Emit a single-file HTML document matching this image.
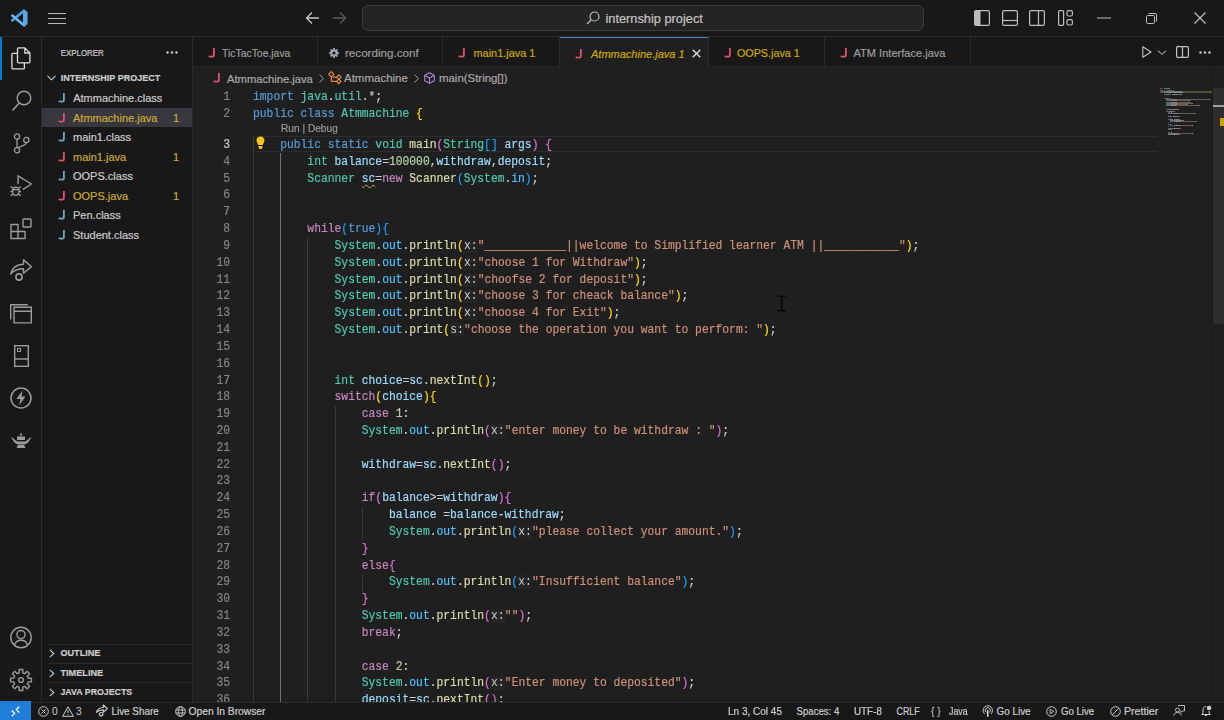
<!DOCTYPE html>
<html><head><meta charset="utf-8">
<style>
*{box-sizing:border-box;margin:0;padding:0}
html,body{width:1224px;height:720px;overflow:hidden;background:#1f1f1f;font-family:"Liberation Sans",sans-serif;color:#cccccc}
.cal,.fi .n,.fi .bd{-webkit-text-stroke:0.2px currentColor}
.abs{position:absolute}
#title{position:absolute;left:0;top:0;width:1224px;height:37px;background:#181818;border-bottom:1px solid #2b2b2b}
#act{position:absolute;left:0;top:37px;width:42px;height:665px;background:#181818;border-right:1px solid #2b2b2b}
#side{position:absolute;left:42px;top:37px;width:151px;height:665px;background:#181818;border-right:1px solid #2b2b2b}
#tabs{position:absolute;left:193px;top:37px;width:1031px;height:30px;background:#181818;border-bottom:1px solid #232323}
#status{position:absolute;left:0;top:702px;width:1224px;height:18px;background:#181818;border-top:1px solid #2b2b2b;font-size:10.5px;color:#cccccc}
.tab{position:absolute;top:37px;height:29px;border-right:1px solid #2b2b2b;font-size:11px;color:#9d9d9d;white-space:nowrap}
.tab .tx{position:absolute;top:10px}
.tab.active{background:#1f1f1f;border-top:1.5px solid #4b7dc4;height:30px}
.jic{position:absolute;font-weight:bold;color:#e8455a;font-size:11px}
.fi{position:absolute;left:42px;width:150px;height:19.5px;font-size:11px;color:#cccccc;white-space:nowrap}
.fi .j{position:absolute;left:17px;top:3px;color:#519aba;font-weight:bold;font-size:11px}
.fi .n{position:absolute;left:31px;top:3.8px}
.fi.err .j{color:#e8455a}
.fi.err .n{color:#c9a93a}
.fi .bd{position:absolute;left:131px;top:3.8px;color:#c9a93a}
.ln{position:absolute;left:198.7px;margin-top:0.6px;width:31px;text-align:right;font-family:"Liberation Mono",monospace;font-size:12.4px;line-height:16.83px;color:#858585;white-space:pre;-webkit-text-stroke:0.2px currentColor;transform:scaleX(0.91386);transform-origin:100% 0}
.ln.act{color:#cccccc}
.cl{position:absolute;left:253.4px;margin-top:0.6px;font-family:"Liberation Mono",monospace;font-size:12.4px;line-height:16.83px;white-space:pre;color:#cccccc;-webkit-text-stroke:0.2px currentColor;transform:scaleX(0.91386);transform-origin:0 0}
.kw{color:#569cd6}.ct{color:#c586c0}.ty{color:#4ec9b0}.fn{color:#dcdcaa}.va{color:#9cdcfe}.co{color:#4fc1ff}
.st{color:#ce9178}.nu{color:#b5cea8}.op{color:#cccccc}.b1{color:#ffd700}.b2{color:#da70d6}.b3{color:#179fff}
.hint{display:inline-block;width:15.32px;background:#252525;color:#d0d0d0;-webkit-text-stroke:0;border-radius:2px;line-height:14px;text-align:center}
.sq{color:#9cdcfe;text-decoration:underline wavy #c4ad4a;text-decoration-thickness:1px;text-underline-offset:2px}
.ig{position:absolute;width:1px;background:#3a3a3a}
.ig.on{background:#707070}
.sect{position:absolute;left:42px;width:150px;height:19px;border-top:1px solid #2b2b2b;font-size:9px;font-weight:bold;color:#cccccc}
svg{position:absolute;overflow:visible}
</style></head><body>

<!-- TITLE BAR -->
<div id="title"></div>
<!-- vscode logo -->
<svg style="left:9.5px;top:9px" width="18" height="18" viewBox="0 0 18 18">
 <path d="M14.2 1.6L2.3 11.4" stroke="#4f9fe6" stroke-width="2.6" stroke-linecap="round"/>
 <path d="M14.2 16.4L2.3 6.6" stroke="#6bb3ee" stroke-width="2.6" stroke-linecap="round"/>
 <path d="M13 0.8L17.6 2.8V15.2L13 17.2Z" fill="#5aa8ec"/>
</svg>
<!-- hamburger -->
<svg style="left:48px;top:12px" width="18" height="13" viewBox="0 0 18 13"><path d="M0 1.5H18M0 6.5H18M0 11.5H18" stroke="#b8b8b8" stroke-width="1.2"/></svg>
<!-- nav arrows -->
<svg style="left:305px;top:11px" width="15" height="14" viewBox="0 0 15 14"><path d="M14 7H1.5M7 1.5L1.5 7L7 12.5" stroke="#c8c8c8" stroke-width="1.3" fill="none"/></svg>
<svg style="left:332px;top:11px" width="15" height="14" viewBox="0 0 15 14"><path d="M1 7H13.5M8 1.5L13.5 7L8 12.5" stroke="#5a5a5a" stroke-width="1.3" fill="none"/></svg>
<!-- search box -->
<div class="abs" style="left:362px;top:5px;width:562px;height:26px;background:#242424;border:1px solid #3a3a3a;border-radius:6px"></div>
<svg style="left:586px;top:11px" width="14" height="14" viewBox="0 0 14 14"><circle cx="8.5" cy="5.5" r="4.5" stroke="#bdbdbd" stroke-width="1.2" fill="none"/><path d="M5.3 8.7L1 13" stroke="#bdbdbd" stroke-width="1.3"/></svg>
<div class="abs" style="left:606px;top:12.3px;font-size:12px;color:#c4c4c4"><span class="cal" title="internship project#0" style="display:inline-block;transform:translateX(-0.50px) scaleX(1.0653);transform-origin:0 50%">internship project</span></div>
<!-- layout icons -->
<svg style="left:974px;top:10px" width="16" height="16" viewBox="0 0 16 16"><rect x="0.6" y="0.6" width="14.8" height="14.8" rx="1.5" stroke="#bdbdbd" stroke-width="1.2" fill="none"/><rect x="1" y="1" width="5.5" height="14" fill="#bdbdbd"/></svg>
<svg style="left:1002px;top:10px" width="16" height="16" viewBox="0 0 16 16"><rect x="0.6" y="0.6" width="14.8" height="14.8" rx="1.5" stroke="#bdbdbd" stroke-width="1.2" fill="none"/><path d="M1 10.5H15" stroke="#bdbdbd" stroke-width="1.2"/></svg>
<svg style="left:1029px;top:10px" width="16" height="16" viewBox="0 0 16 16"><rect x="0.6" y="0.6" width="14.8" height="14.8" rx="1.5" stroke="#bdbdbd" stroke-width="1.2" fill="none"/><path d="M9.5 1V15" stroke="#bdbdbd" stroke-width="1.2"/></svg>
<svg style="left:1058px;top:10px" width="15" height="16" viewBox="0 0 15 16"><rect x="0.6" y="0.6" width="5" height="14.8" rx="1.2" stroke="#bdbdbd" stroke-width="1.2" fill="none"/><rect x="9" y="0.6" width="5.4" height="5.4" rx="1.5" stroke="#bdbdbd" stroke-width="1.2" fill="none"/><rect x="9" y="9.6" width="5.4" height="5.4" rx="1.5" stroke="#bdbdbd" stroke-width="1.2" fill="none"/></svg>
<!-- window controls -->
<svg style="left:1097px;top:17px" width="14" height="2" viewBox="0 0 14 2"><path d="M0 1H14" stroke="#bdbdbd" stroke-width="1"/></svg>
<svg style="left:1146px;top:13px" width="11" height="11" viewBox="0 0 11 11"><rect x="0.5" y="2.5" width="8" height="8" rx="1.2" stroke="#bdbdbd" fill="none"/><path d="M2.5 0.5H9A1.5 1.5 0 0 1 10.5 2V8.5" stroke="#bdbdbd" fill="none"/></svg>
<svg style="left:1194px;top:12px" width="12" height="12" viewBox="0 0 12 12"><path d="M0.5 0.5L11.5 11.5M11.5 0.5L0.5 11.5" stroke="#c4c4c4" stroke-width="1.1"/></svg>

<!-- ACTIVITY BAR -->
<div id="act"></div>
<div class="abs" style="left:0;top:37px;width:2px;height:43px;background:#0078d4"></div>
<svg style="left:11px;top:47px" width="20" height="22" viewBox="0 0 20 22"><path d="M7.5 0.9H13.8L18.9 6V14.8A1 1 0 0 1 17.9 15.8H7.5A1 1 0 0 1 6.5 14.8V1.9A1 1 0 0 1 7.5 0.9Z M13.8 0.9V6H18.9" stroke="#dcdcdc" stroke-width="1.3" fill="none" stroke-linejoin="round"/><path d="M6.5 6.3H1.9A1 1 0 0 0 0.9 7.3V20.9A1 1 0 0 0 1.9 21.9H12.4A1 1 0 0 0 13.4 20.9V15.8" stroke="#dcdcdc" stroke-width="1.3" fill="none"/></svg>
<svg style="left:11px;top:90px" width="21" height="22" viewBox="0 0 21 22"><circle cx="13" cy="8" r="6.8" stroke="#9c9c9c" stroke-width="1.4" fill="none"/><path d="M8.2 13L1.5 20.5" stroke="#9c9c9c" stroke-width="1.6"/></svg>
<svg style="left:13px;top:133px" width="17" height="21" viewBox="0 0 17 21"><circle cx="4" cy="3.5" r="2.6" stroke="#9c9c9c" stroke-width="1.3" fill="none"/><circle cx="4" cy="17.3" r="2.6" stroke="#9c9c9c" stroke-width="1.3" fill="none"/><circle cx="13.3" cy="7" r="2.6" stroke="#9c9c9c" stroke-width="1.3" fill="none"/><path d="M4 6.1V14.7M13.3 9.6C13.3 13 8 12.5 4.5 14.8" stroke="#9c9c9c" stroke-width="1.3" fill="none"/></svg>
<svg style="left:10px;top:175px" width="22" height="22" viewBox="0 0 22 22"><path d="M8.1 9.2V0.8L21.4 9L12.7 14.6" stroke="#9c9c9c" stroke-width="1.4" fill="none" stroke-linejoin="round"/><ellipse cx="5.8" cy="16.3" rx="3.2" ry="4.1" stroke="#9c9c9c" stroke-width="1.4" fill="none"/><path d="M2.8 14.6H8.8M0.6 11.6L2.9 13.1M0.6 16.5H2.6M0.6 20.6L2.9 19.4M11 11.6L8.7 13.1M11 16.5H9M11 20.6L8.7 19.4" stroke="#9c9c9c" stroke-width="1.3" fill="none"/></svg>
<svg style="left:10px;top:218px" width="22" height="21" viewBox="0 0 22 21"><path d="M1 6.5H8V13.5H15V20.5H1Z M8 13.5V20.5 M1 13.5H8" stroke="#9c9c9c" stroke-width="1.4" fill="none" stroke-linejoin="round"/><rect x="13" y="1" width="8" height="8" rx="0.8" stroke="#9c9c9c" stroke-width="1.4" fill="none"/></svg>
<svg style="left:10px;top:258px" width="22" height="23" viewBox="0 0 22 23"><path d="M0.7 16C2 9.5 7 6.5 13.5 6.3V1.8L21.3 8.6L13.5 15.2V10.8C8 10.8 4 12.3 0.7 16Z" stroke="#9c9c9c" stroke-width="1.4" fill="none" stroke-linejoin="round"/><circle cx="9" cy="19" r="3.1" stroke="#9c9c9c" stroke-width="1.6" fill="none"/></svg>
<svg style="left:10px;top:304px" width="22" height="20" viewBox="0 0 22 20"><path d="M0.7 15.5V0.7H17.8" stroke="#9c9c9c" stroke-width="1.4" fill="none"/><path d="M4 3.2H21.3V18.9H4Z M4 7.2H21.3" stroke="#9c9c9c" stroke-width="1.4" fill="none"/></svg>
<svg style="left:14px;top:345px" width="15" height="22" viewBox="0 0 15 22"><rect x="0.7" y="0.7" width="13.6" height="20.6" stroke="#9c9c9c" stroke-width="1.4" fill="none"/><path d="M1 14H14" stroke="#9c9c9c" stroke-width="1.4"/><rect x="3.5" y="3.5" width="3" height="3" stroke="#9c9c9c" stroke-width="1" fill="none"/></svg>
<svg style="left:10px;top:387px" width="22" height="22" viewBox="0 0 22 22"><circle cx="11" cy="11" r="10" stroke="#9c9c9c" stroke-width="1.5" fill="none"/><path d="M12.5 3.5L6.5 12H10.5L9 18.5L15.5 9.5H11.5Z" fill="#9c9c9c"/></svg>
<svg style="left:10px;top:432px" width="22" height="17" viewBox="0 0 22 17"><path d="M11 0.5L12.5 3.5H9.5Z" fill="#9c9c9c"/><path d="M1 5C4 6 5 9 8 9.5H15C17 9 19 6 21.5 5C20 8 18 12 14 12.5H8C5 12 3 9 1 5Z" fill="#9c9c9c"/><path d="M7 4.5H15V8H7Z" fill="#9c9c9c"/><path d="M8 13H14L15.5 16H6.5Z" fill="#9c9c9c"/></svg>
<svg style="left:10px;top:626px" width="22" height="23" viewBox="0 0 22 23"><circle cx="11" cy="11.5" r="10.2" stroke="#9c9c9c" stroke-width="1.4" fill="none"/><circle cx="11" cy="8.6" r="4.1" stroke="#9c9c9c" stroke-width="1.4" fill="none"/><path d="M4.6 18.9C5.6 15.6 8 14.2 11 14.2C14 14.2 16.4 15.6 17.4 18.9" stroke="#9c9c9c" stroke-width="1.4" fill="none"/></svg>
<svg style="left:10px;top:669px" width="22" height="22" viewBox="0 0 22 22"><path d="M18.17 9.17 L21.45 9.21 L21.45 12.79 L18.17 12.83 L17.36 14.78 L19.66 17.12 L17.12 19.66 L14.78 17.36 L12.83 18.17 L12.79 21.45 L9.21 21.45 L9.17 18.17 L7.22 17.36 L4.88 19.66 L2.34 17.12 L4.64 14.78 L3.83 12.83 L0.55 12.79 L0.55 9.21 L3.83 9.17 L4.64 7.22 L2.34 4.88 L4.88 2.34 L7.22 4.64 L9.17 3.83 L9.21 0.55 L12.79 0.55 L12.83 3.83 L14.78 4.64 L17.12 2.34 L19.66 4.88 L17.36 7.22Z" stroke="#9c9c9c" stroke-width="1.4" fill="none" stroke-linejoin="round"/><circle cx="11" cy="11" r="2.4" stroke="#9c9c9c" stroke-width="1.4" fill="none"/></svg>

<!-- SIDEBAR -->
<div id="side"></div>
<div class="abs" style="left:60.5px;top:48px;font-size:8.4px;color:#cccccc"><span class="cal" title="EXPLORER#0" style="display:inline-block;transform:translateX(-0.23px) scaleX(0.9393);transform-origin:0 50%">EXPLORER</span></div>
<svg style="left:166px;top:51px" width="12" height="3" viewBox="0 0 12 3"><circle cx="1.5" cy="1.5" r="1.2" fill="#ccc"/><circle cx="6" cy="1.5" r="1.2" fill="#ccc"/><circle cx="10.5" cy="1.5" r="1.2" fill="#ccc"/></svg>
<svg style="left:47px;top:75px" width="9" height="6" viewBox="0 0 9 6"><path d="M0.5 0.8L4.5 4.8L8.5 0.8" stroke="#cccccc" stroke-width="1.1" fill="none"/></svg>
<div class="abs" style="left:60px;top:72.5px;font-size:9.2px;font-weight:bold;color:#cccccc"><span class="cal" title="INTERNSHIP PROJECT#0" style="display:inline-block;transform:translateX(0.74px) scaleX(0.9805);transform-origin:0 50%">INTERNSHIP PROJECT</span></div>
<div class="fi" style="top:88.2px;"><span class="n"><span class="cal" title="Atmmachine.class#0" style="display:inline-block;transform:translateX(0.24px) scaleX(0.9973);transform-origin:0 50%">Atmmachine.class</span></span></div>
<svg style="left:58.3px;top:92px" width="8" height="11" viewBox="0 0 8 11"><path d="M5.9 1V8Q5.9 9.6 4.3 9.6H2.7Q1.5 9.6 0.9 8.7" stroke="#6fa8c4" stroke-width="1.8" fill="none"/></svg>
<div class="fi err" style="top:107.8px;background:#37373d;"><span class="n">Atmmachine.java</span><span class="bd">1</span></div>
<svg style="left:58.3px;top:111.5px" width="8" height="11" viewBox="0 0 8 11"><path d="M5.9 1V8Q5.9 9.6 4.3 9.6H2.7Q1.5 9.6 0.9 8.7" stroke="#e0506e" stroke-width="1.8" fill="none"/></svg>
<div class="fi" style="top:127.2px;"><span class="n">main1.class</span></div>
<svg style="left:58.3px;top:131px" width="8" height="11" viewBox="0 0 8 11"><path d="M5.9 1V8Q5.9 9.6 4.3 9.6H2.7Q1.5 9.6 0.9 8.7" stroke="#6fa8c4" stroke-width="1.8" fill="none"/></svg>
<div class="fi err" style="top:146.8px;"><span class="n">main1.java</span><span class="bd">1</span></div>
<svg style="left:58.3px;top:150.5px" width="8" height="11" viewBox="0 0 8 11"><path d="M5.9 1V8Q5.9 9.6 4.3 9.6H2.7Q1.5 9.6 0.9 8.7" stroke="#e0506e" stroke-width="1.8" fill="none"/></svg>
<div class="fi" style="top:166.2px;"><span class="n">OOPS.class</span></div>
<svg style="left:58.3px;top:170px" width="8" height="11" viewBox="0 0 8 11"><path d="M5.9 1V8Q5.9 9.6 4.3 9.6H2.7Q1.5 9.6 0.9 8.7" stroke="#6fa8c4" stroke-width="1.8" fill="none"/></svg>
<div class="fi err" style="top:185.8px;"><span class="n">OOPS.java</span><span class="bd">1</span></div>
<svg style="left:58.3px;top:189.5px" width="8" height="11" viewBox="0 0 8 11"><path d="M5.9 1V8Q5.9 9.6 4.3 9.6H2.7Q1.5 9.6 0.9 8.7" stroke="#e0506e" stroke-width="1.8" fill="none"/></svg>
<div class="fi" style="top:205.2px;"><span class="n">Pen.class</span></div>
<svg style="left:58.3px;top:209px" width="8" height="11" viewBox="0 0 8 11"><path d="M5.9 1V8Q5.9 9.6 4.3 9.6H2.7Q1.5 9.6 0.9 8.7" stroke="#6fa8c4" stroke-width="1.8" fill="none"/></svg>
<div class="fi" style="top:224.8px;"><span class="n">Student.class</span></div>
<svg style="left:58.3px;top:228.5px" width="8" height="11" viewBox="0 0 8 11"><path d="M5.9 1V8Q5.9 9.6 4.3 9.6H2.7Q1.5 9.6 0.9 8.7" stroke="#6fa8c4" stroke-width="1.8" fill="none"/></svg>
<div class="abs" style="left:47px;top:643.5px;width:145px;height:1px;background:#2b2b2b"></div>
<svg style="left:49px;top:649.0px" width="6" height="9" viewBox="0 0 6 9"><path d="M0.8 0.8L4.8 4.5L0.8 8.2" stroke="#cccccc" stroke-width="1.1" fill="none"/></svg>
<div class="abs" style="left:60px;top:647.1px;font-size:9.9px;font-weight:bold;color:#cccccc"><span class="cal" title="OUTLINE#0" style="display:inline-block;transform:translateX(0.44px) scaleX(0.9228);transform-origin:0 50%">OUTLINE</span></div>
<div class="abs" style="left:47px;top:663.0px;width:145px;height:1px;background:#2b2b2b"></div>
<svg style="left:49px;top:668.5px" width="6" height="9" viewBox="0 0 6 9"><path d="M0.8 0.8L4.8 4.5L0.8 8.2" stroke="#cccccc" stroke-width="1.1" fill="none"/></svg>
<div class="abs" style="left:60px;top:666.6px;font-size:9.9px;font-weight:bold;color:#cccccc"><span class="cal" title="TIMELINE#0" style="display:inline-block;transform:translateX(0.44px) scaleX(0.9280);transform-origin:0 50%">TIMELINE</span></div>
<div class="abs" style="left:47px;top:682.0px;width:145px;height:1px;background:#2b2b2b"></div>
<svg style="left:49px;top:687.5px" width="6" height="9" viewBox="0 0 6 9"><path d="M0.8 0.8L4.8 4.5L0.8 8.2" stroke="#cccccc" stroke-width="1.1" fill="none"/></svg>
<div class="abs" style="left:60px;top:685.6px;font-size:9.9px;font-weight:bold;color:#cccccc"><span class="cal" title="JAVA PROJECTS#0" style="display:inline-block;transform:translateX(0.45px) scaleX(0.8920);transform-origin:0 50%">JAVA PROJECTS</span></div>

<!-- TABS -->
<div id="tabs"></div>
<div class="tab" style="left:193px;width:125px"><svg style="left:15px;top:9.5px" width="8" height="11" viewBox="0 0 8 11"><path d="M5.9 1V8Q5.9 9.6 4.3 9.6H2.7Q1.5 9.6 0.9 8.7" stroke="#e0506e" stroke-width="1.8" fill="none"/></svg><span class="tx" style="left:28px;color:#9d9d9d;"><span class="cal" title="TicTacToe.java#0" style="display:inline-block;transform:translateX(0.99px) scaleX(0.9453);transform-origin:0 50%">TicTacToe.java</span></span></div>
<div class="tab" style="left:318px;width:125px"><svg style="left:11px;top:10.6px" width="10" height="10" viewBox="0 0 10 10"><path d="M8.59 4.12 L9.94 4.20 L9.94 5.80 L8.59 5.88 L8.16 6.92 L9.05 7.93 L7.93 9.05 L6.92 8.16 L5.88 8.59 L5.80 9.94 L4.20 9.94 L4.12 8.59 L3.08 8.16 L2.07 9.05 L0.95 7.93 L1.84 6.92 L1.41 5.88 L0.06 5.80 L0.06 4.20 L1.41 4.12 L1.84 3.08 L0.95 2.07 L2.07 0.95 L3.08 1.84 L4.12 1.41 L4.20 0.06 L5.80 0.06 L5.88 1.41 L6.92 1.84 L7.93 0.95 L9.05 2.07 L8.16 3.08Z M6.6 5A1.6 1.6 0 1 0 3.4 5A1.6 1.6 0 1 0 6.6 5Z" fill="#a4a8ac" fill-rule="evenodd"/></svg><span class="tx" style="left:27.6px;color:#9d9d9d;"><span class="cal" title="recording.conf#0" style="display:inline-block;transform:translateX(-1.03px) scaleX(1.0575);transform-origin:0 50%">recording.conf</span></span></div>
<div class="tab" style="left:443px;width:117px"><svg style="left:15px;top:9.5px" width="8" height="11" viewBox="0 0 8 11"><path d="M5.9 1V8Q5.9 9.6 4.3 9.6H2.7Q1.5 9.6 0.9 8.7" stroke="#e0506e" stroke-width="1.8" fill="none"/></svg><span class="tx" style="left:28px;color:#cca700;"><span class="cal" title="main1.java 1#0" style="display:inline-block;transform:translateX(2.50px) scaleX(0.9920);transform-origin:0 50%">main1.java 1</span></span></div>
<div class="tab active" style="left:560px;width:149px"><svg style="left:15px;top:9.5px" width="8" height="11" viewBox="0 0 8 11"><path d="M5.9 1V8Q5.9 9.6 4.3 9.6H2.7Q1.5 9.6 0.9 8.7" stroke="#e0506e" stroke-width="1.8" fill="none"/></svg><span class="tx" style="left:28px;color:#cca700;font-style:italic;"><span class="cal" title="Atmmachine.java 1#0" style="display:inline-block;transform:translateX(3.00px) scaleX(1.0001);transform-origin:0 50%">Atmmachine.java 1</span></span><svg style="left:132px;top:11px" width="9" height="9" viewBox="0 0 9 9"><path d="M0.7 0.7L8.3 8.3M8.3 0.7L0.7 8.3" stroke="#e0e0e0" stroke-width="1.3"/></svg></div>
<div class="tab" style="left:709px;width:116px"><svg style="left:15px;top:9.5px" width="8" height="11" viewBox="0 0 8 11"><path d="M5.9 1V8Q5.9 9.6 4.3 9.6H2.7Q1.5 9.6 0.9 8.7" stroke="#e0506e" stroke-width="1.8" fill="none"/></svg><span class="tx" style="left:28px;color:#cca700;"><span class="cal" title="OOPS.java 1#0" style="display:inline-block;transform:translateX(-0.01px) scaleX(0.9768);transform-origin:0 50%">OOPS.java 1</span></span></div>
<div class="tab" style="left:825px;width:146px"><svg style="left:15px;top:9.5px" width="8" height="11" viewBox="0 0 8 11"><path d="M5.9 1V8Q5.9 9.6 4.3 9.6H2.7Q1.5 9.6 0.9 8.7" stroke="#e0506e" stroke-width="1.8" fill="none"/></svg><span class="tx" style="left:28px;color:#9d9d9d;"><span class="cal" title="ATM Interface.java#0" style="display:inline-block;transform:translateX(0.49px) scaleX(1.0055);transform-origin:0 50%">ATM Interface.java</span></span></div>
<!-- editor actions -->
<svg style="left:1142px;top:46px" width="10" height="12" viewBox="0 0 10 12"><path d="M0.8 0.8L9 6L0.8 11.2Z" stroke="#c4c4c4" stroke-width="1.1" fill="none" stroke-linejoin="round"/></svg>
<svg style="left:1157px;top:50px" width="10" height="5" viewBox="0 0 10 5"><path d="M0.8 0.8L5 4.2L9.2 0.8" stroke="#c4c4c4" stroke-width="1" fill="none"/></svg>
<svg style="left:1176px;top:46px" width="13" height="12" viewBox="0 0 13 12"><rect x="0.6" y="0.6" width="11.8" height="10.8" rx="1.2" stroke="#c4c4c4" stroke-width="1.2" fill="none"/><path d="M6.5 1V11" stroke="#c4c4c4" stroke-width="1.2"/></svg>
<svg style="left:1199px;top:51px" width="12" height="3" viewBox="0 0 12 3"><circle cx="1.5" cy="1.5" r="1.2" fill="#ccc"/><circle cx="6" cy="1.5" r="1.2" fill="#ccc"/><circle cx="10.5" cy="1.5" r="1.2" fill="#ccc"/></svg>

<!-- BREADCRUMBS -->
<svg style="left:212.5px;top:72px" width="8" height="11" viewBox="0 0 8 11"><path d="M5.9 1V8Q5.9 9.6 4.3 9.6H2.7Q1.5 9.6 0.9 8.7" stroke="#e0506e" stroke-width="1.8" fill="none"/></svg>
<div class="abs" style="left:226.5px;top:72.5px;font-size:11.2px;color:#a9a9a9;white-space:pre"><span class="cal" title="Atmmachine.java#1" style="display:inline-block;transform:translateX(-0.01px) scaleX(1.0002);transform-origin:0 50%">Atmmachine.java</span></div>
<svg style="left:319px;top:73.5px" width="5" height="9" viewBox="0 0 5 9"><path d="M0.5 0.5L4.3 4.5L0.5 8.5" stroke="#a0a0a0" stroke-width="1" fill="none"/></svg>
<svg style="left:328px;top:71px" width="14" height="13" viewBox="0 0 14 13"><path d="M3.3 0.7L5.9 3.3L3.3 5.9L0.7 3.3Z M10.8 3.9L13 6.1L10.8 8.3L8.6 6.1Z M10.8 8.1L13 10.3L10.8 12.5L8.6 10.3Z M3.3 5.9V10.3H8.6 M4.6 6.1H8.6" stroke="#ea8a3a" stroke-width="1.2" fill="none" stroke-linejoin="round"/></svg>
<div class="abs" style="left:344px;top:72.3px;font-size:11.5px;color:#a9a9a9;white-space:pre"><span class="cal" title="Atmmachine#0" style="display:inline-block;transform:translateX(0.00px) scaleX(1.0000);transform-origin:0 50%">Atmmachine</span></div>
<svg style="left:414px;top:73.5px" width="5" height="9" viewBox="0 0 5 9"><path d="M0.5 0.5L4.3 4.5L0.5 8.5" stroke="#a0a0a0" stroke-width="1" fill="none"/></svg>
<svg style="left:424px;top:72px" width="11" height="12" viewBox="0 0 11 12"><path d="M5.5 0.7L10.3 3.3V8.7L5.5 11.3L0.7 8.7V3.3Z M0.9 3.4L5.5 6L10.1 3.4 M5.5 6V11.2" stroke="#b180d7" stroke-width="1.1" fill="none" stroke-linejoin="round"/></svg>
<div class="abs" style="left:439.4px;top:72.3px;font-size:11.5px;color:#a9a9a9;white-space:pre"><span class="cal" title="main(String[])#0" style="display:inline-block;transform:translateX(-0.01px) scaleX(0.9928);transform-origin:0 50%">main(String[])</span></div>

<!-- EDITOR -->
<div class="abs" style="left:253px;top:136.3px;width:904px;height:15.3px;border:1px solid #2c2c2c;border-right:none"></div>
<div class="ig" style="left:253px;top:136.3px;height:572.2px"></div>
<div class="ig on" style="left:280px;top:153.1px;height:555.4px"></div>
<div class="ig" style="left:307px;top:237.3px;height:471.2px"></div>
<div class="ig" style="left:335px;top:405.6px;height:302.9px"></div>
<div class="ig" style="left:362px;top:506.6px;height:33.7px"></div>
<div class="ig" style="left:362px;top:573.9px;height:16.8px"></div>
<svg style="left:256px;top:135.5px" width="9" height="13" viewBox="0 0 9 13"><path d="M4.5 0.5C2 0.5 0.5 2.4 0.5 4.5C0.5 6.5 2 7.5 2.3 9H6.7C7 7.5 8.5 6.5 8.5 4.5C8.5 2.4 7 0.5 4.5 0.5Z" fill="#f5c518"/><path d="M2.6 10H6.4V11.2A1.9 1.9 0 0 1 2.6 11.2Z" fill="#f5c518"/></svg>
<div class="abs" style="left:281px;top:122px;font-size:10.5px;color:#999999;white-space:pre"><span class="cal" title="Run | Debug#0" style="display:inline-block;transform:translateX(0.00px) scaleX(0.9663);transform-origin:0 50%">Run | Debug</span></div>
<div class="ln" style="top:88.14px">1</div>
<div class="cl" style="top:88.14px"><span class="kw">import</span><span class="op"> </span><span class="ty">java</span><span class="op">.</span><span class="ty">util</span><span class="op">.*;</span></div>
<div class="ln" style="top:104.97px">2</div>
<div class="cl" style="top:104.97px"><span class="kw">public</span><span class="op"> </span><span class="kw">class</span><span class="op"> </span><span class="ty">Atmmachine</span><span class="op"> </span><span class="b1">{</span></div>
<div class="ln act" style="top:136.30px">3</div>
<div class="cl" style="top:136.30px"><span class="op">    </span><span class="kw">public</span><span class="op"> </span><span class="kw">static</span><span class="op"> </span><span class="ty">void</span><span class="op"> </span><span class="fn">main</span><span class="b2">(</span><span class="ty">String</span><span class="b3">[]</span><span class="op"> </span><span class="va">args</span><span class="b2">)</span><span class="op"> </span><span class="b2">{</span></div>
<div class="ln" style="top:153.13px">4</div>
<div class="cl" style="top:153.13px"><span class="op">        </span><span class="ty">int</span><span class="op"> </span><span class="va">balance</span><span class="op">=</span><span class="nu">100000</span><span class="op">,</span><span class="va">withdraw</span><span class="op">,</span><span class="va">deposit</span><span class="op">;</span></div>
<div class="ln" style="top:169.96px">5</div>
<div class="cl" style="top:169.96px"><span class="op">        </span><span class="ty">Scanner</span><span class="op"> </span><span class="sq">sc</span><span class="op">=</span><span class="ct">new</span><span class="op"> </span><span class="fn">Scanner</span><span class="b3">(</span><span class="ty">System</span><span class="op">.</span><span class="co">in</span><span class="b3">)</span><span class="op">;</span></div>
<div class="ln" style="top:186.79px">6</div>
<div class="ln" style="top:203.62px">7</div>
<div class="ln" style="top:220.45px">8</div>
<div class="cl" style="top:220.45px"><span class="op">        </span><span class="ct">while</span><span class="b3">(</span><span class="kw">true</span><span class="b3">)</span><span class="b3">{</span></div>
<div class="ln" style="top:237.28px">9</div>
<div class="cl" style="top:237.28px"><span class="op">            </span><span class="ty">System</span><span class="op">.</span><span class="co">out</span><span class="op">.</span><span class="fn">println</span><span class="b1">(</span><span class="hint">x:</span><span class="st">&quot;____________||welcome to Simplified learner ATM ||___________&quot;</span><span class="b1">)</span><span class="op">;</span></div>
<div class="ln" style="top:254.11px">10</div>
<div class="cl" style="top:254.11px"><span class="op">            </span><span class="ty">System</span><span class="op">.</span><span class="co">out</span><span class="op">.</span><span class="fn">println</span><span class="b1">(</span><span class="hint">x:</span><span class="st">&quot;choose 1 for Withdraw&quot;</span><span class="b1">)</span><span class="op">;</span></div>
<div class="ln" style="top:270.94px">11</div>
<div class="cl" style="top:270.94px"><span class="op">            </span><span class="ty">System</span><span class="op">.</span><span class="co">out</span><span class="op">.</span><span class="fn">println</span><span class="b1">(</span><span class="hint">x:</span><span class="st">&quot;choofse 2 for deposit&quot;</span><span class="b1">)</span><span class="op">;</span></div>
<div class="ln" style="top:287.77px">12</div>
<div class="cl" style="top:287.77px"><span class="op">            </span><span class="ty">System</span><span class="op">.</span><span class="co">out</span><span class="op">.</span><span class="fn">println</span><span class="b1">(</span><span class="hint">x:</span><span class="st">&quot;choose 3 for cheack balance&quot;</span><span class="b1">)</span><span class="op">;</span></div>
<div class="ln" style="top:304.60px">13</div>
<div class="cl" style="top:304.60px"><span class="op">            </span><span class="ty">System</span><span class="op">.</span><span class="co">out</span><span class="op">.</span><span class="fn">println</span><span class="b1">(</span><span class="hint">x:</span><span class="st">&quot;choose 4 for Exit&quot;</span><span class="b1">)</span><span class="op">;</span></div>
<div class="ln" style="top:321.43px">14</div>
<div class="cl" style="top:321.43px"><span class="op">            </span><span class="ty">System</span><span class="op">.</span><span class="co">out</span><span class="op">.</span><span class="fn">print</span><span class="b1">(</span><span class="hint">s:</span><span class="st">&quot;choose the operation you want to perform: &quot;</span><span class="b1">)</span><span class="op">;</span></div>
<div class="ln" style="top:338.26px">15</div>
<div class="ln" style="top:355.09px">16</div>
<div class="ln" style="top:371.92px">17</div>
<div class="cl" style="top:371.92px"><span class="op">            </span><span class="ty">int</span><span class="op"> </span><span class="va">choice</span><span class="op">=</span><span class="va">sc</span><span class="op">.</span><span class="fn">nextInt</span><span class="b1">()</span><span class="op">;</span></div>
<div class="ln" style="top:388.75px">18</div>
<div class="cl" style="top:388.75px"><span class="op">            </span><span class="ct">switch</span><span class="b1">(</span><span class="va">choice</span><span class="b1">)</span><span class="b1">{</span></div>
<div class="ln" style="top:405.58px">19</div>
<div class="cl" style="top:405.58px"><span class="op">                </span><span class="ct">case</span><span class="op"> </span><span class="nu">1</span><span class="op">:</span></div>
<div class="ln" style="top:422.41px">20</div>
<div class="cl" style="top:422.41px"><span class="op">                </span><span class="ty">System</span><span class="op">.</span><span class="co">out</span><span class="op">.</span><span class="fn">println</span><span class="b2">(</span><span class="hint">x:</span><span class="st">&quot;enter money to be withdraw : &quot;</span><span class="b2">)</span><span class="op">;</span></div>
<div class="ln" style="top:439.24px">21</div>
<div class="ln" style="top:456.07px">22</div>
<div class="cl" style="top:456.07px"><span class="op">                </span><span class="va">withdraw</span><span class="op">=</span><span class="va">sc</span><span class="op">.</span><span class="fn">nextInt</span><span class="b2">()</span><span class="op">;</span></div>
<div class="ln" style="top:472.90px">23</div>
<div class="ln" style="top:489.73px">24</div>
<div class="cl" style="top:489.73px"><span class="op">                </span><span class="ct">if</span><span class="b2">(</span><span class="va">balance</span><span class="op">&gt;=</span><span class="va">withdraw</span><span class="b2">)</span><span class="b2">{</span></div>
<div class="ln" style="top:506.56px">25</div>
<div class="cl" style="top:506.56px"><span class="op">                    </span><span class="va">balance</span><span class="op"> =</span><span class="va">balance</span><span class="op">-</span><span class="va">withdraw</span><span class="op">;</span></div>
<div class="ln" style="top:523.39px">26</div>
<div class="cl" style="top:523.39px"><span class="op">                    </span><span class="ty">System</span><span class="op">.</span><span class="co">out</span><span class="op">.</span><span class="fn">println</span><span class="b3">(</span><span class="hint">x:</span><span class="st">&quot;please collect your amount.&quot;</span><span class="b3">)</span><span class="op">;</span></div>
<div class="ln" style="top:540.22px">27</div>
<div class="cl" style="top:540.22px"><span class="op">                </span><span class="b2">}</span></div>
<div class="ln" style="top:557.05px">28</div>
<div class="cl" style="top:557.05px"><span class="op">                </span><span class="ct">else</span><span class="b2">{</span></div>
<div class="ln" style="top:573.88px">29</div>
<div class="cl" style="top:573.88px"><span class="op">                    </span><span class="ty">System</span><span class="op">.</span><span class="co">out</span><span class="op">.</span><span class="fn">println</span><span class="b3">(</span><span class="hint">x:</span><span class="st">&quot;Insufficient balance&quot;</span><span class="b3">)</span><span class="op">;</span></div>
<div class="ln" style="top:590.71px">30</div>
<div class="cl" style="top:590.71px"><span class="op">                </span><span class="b2">}</span></div>
<div class="ln" style="top:607.54px">31</div>
<div class="cl" style="top:607.54px"><span class="op">                </span><span class="ty">System</span><span class="op">.</span><span class="co">out</span><span class="op">.</span><span class="fn">println</span><span class="b2">(</span><span class="hint">x:</span><span class="st">&quot;&quot;</span><span class="b2">)</span><span class="op">;</span></div>
<div class="ln" style="top:624.37px">32</div>
<div class="cl" style="top:624.37px"><span class="op">                </span><span class="ct">break</span><span class="op">;</span></div>
<div class="ln" style="top:641.20px">33</div>
<div class="ln" style="top:658.03px">34</div>
<div class="cl" style="top:658.03px"><span class="op">                </span><span class="ct">case</span><span class="op"> </span><span class="nu">2</span><span class="op">:</span></div>
<div class="ln" style="top:674.86px">35</div>
<div class="cl" style="top:674.86px"><span class="op">                </span><span class="ty">System</span><span class="op">.</span><span class="co">out</span><span class="op">.</span><span class="fn">println</span><span class="b2">(</span><span class="hint">x:</span><span class="st">&quot;Enter money to deposited&quot;</span><span class="b2">)</span><span class="op">;</span></div>
<div class="ln" style="top:691.69px">36</div>
<div class="cl" style="top:691.69px"><span class="op">                </span><span class="va">deposit</span><span class="op">=</span><span class="va">sc</span><span class="op">.</span><span class="fn">nextInt</span><span class="b2">()</span><span class="op">;</span></div>

<!-- minimap + scrollbar -->
<div class="abs" style="left:1160px;top:91.3px;width:53px;height:1.5px;background:#55553a;opacity:0.9"></div>
<div class="abs" style="left:1160.0px;top:88.40px;width:3.1px;height:1px;background:#569cd6;opacity:0.5;filter:saturate(0.4)"></div>
<div class="abs" style="left:1163.6px;top:88.40px;width:2.1px;height:1px;background:#4ec9b0;opacity:0.5;filter:saturate(0.4)"></div>
<div class="abs" style="left:1165.7px;top:88.40px;width:0.5px;height:1px;background:#cccccc;opacity:0.5;filter:saturate(0.4)"></div>
<div class="abs" style="left:1166.2px;top:88.40px;width:2.1px;height:1px;background:#4ec9b0;opacity:0.5;filter:saturate(0.4)"></div>
<div class="abs" style="left:1168.3px;top:88.40px;width:1.6px;height:1px;background:#cccccc;opacity:0.5;filter:saturate(0.4)"></div>
<div class="abs" style="left:1160.0px;top:89.71px;width:3.1px;height:1px;background:#569cd6;opacity:0.5;filter:saturate(0.4)"></div>
<div class="abs" style="left:1163.6px;top:89.71px;width:2.6px;height:1px;background:#569cd6;opacity:0.5;filter:saturate(0.4)"></div>
<div class="abs" style="left:1166.8px;top:89.71px;width:5.2px;height:1px;background:#4ec9b0;opacity:0.5;filter:saturate(0.4)"></div>
<div class="abs" style="left:1172.5px;top:89.71px;width:0.5px;height:1px;background:#ffd700;opacity:0.5;filter:saturate(0.4)"></div>
<div class="abs" style="left:1162.1px;top:91.02px;width:3.1px;height:1px;background:#569cd6;opacity:0.5;filter:saturate(0.4)"></div>
<div class="abs" style="left:1165.7px;top:91.02px;width:3.1px;height:1px;background:#569cd6;opacity:0.5;filter:saturate(0.4)"></div>
<div class="abs" style="left:1169.4px;top:91.02px;width:2.1px;height:1px;background:#4ec9b0;opacity:0.5;filter:saturate(0.4)"></div>
<div class="abs" style="left:1172.0px;top:91.02px;width:2.1px;height:1px;background:#dcdcaa;opacity:0.5;filter:saturate(0.4)"></div>
<div class="abs" style="left:1174.0px;top:91.02px;width:0.5px;height:1px;background:#da70d6;opacity:0.5;filter:saturate(0.4)"></div>
<div class="abs" style="left:1174.6px;top:91.02px;width:3.1px;height:1px;background:#4ec9b0;opacity:0.5;filter:saturate(0.4)"></div>
<div class="abs" style="left:1177.7px;top:91.02px;width:1.0px;height:1px;background:#179fff;opacity:0.5;filter:saturate(0.4)"></div>
<div class="abs" style="left:1179.2px;top:91.02px;width:2.1px;height:1px;background:#9cdcfe;opacity:0.5;filter:saturate(0.4)"></div>
<div class="abs" style="left:1181.3px;top:91.02px;width:0.5px;height:1px;background:#da70d6;opacity:0.5;filter:saturate(0.4)"></div>
<div class="abs" style="left:1182.4px;top:91.02px;width:0.5px;height:1px;background:#da70d6;opacity:0.5;filter:saturate(0.4)"></div>
<div class="abs" style="left:1164.2px;top:92.33px;width:1.6px;height:1px;background:#4ec9b0;opacity:0.5;filter:saturate(0.4)"></div>
<div class="abs" style="left:1166.2px;top:92.33px;width:3.6px;height:1px;background:#9cdcfe;opacity:0.5;filter:saturate(0.4)"></div>
<div class="abs" style="left:1169.9px;top:92.33px;width:0.5px;height:1px;background:#cccccc;opacity:0.5;filter:saturate(0.4)"></div>
<div class="abs" style="left:1170.4px;top:92.33px;width:3.1px;height:1px;background:#b5cea8;opacity:0.5;filter:saturate(0.4)"></div>
<div class="abs" style="left:1173.5px;top:92.33px;width:0.5px;height:1px;background:#cccccc;opacity:0.5;filter:saturate(0.4)"></div>
<div class="abs" style="left:1174.0px;top:92.33px;width:4.2px;height:1px;background:#9cdcfe;opacity:0.5;filter:saturate(0.4)"></div>
<div class="abs" style="left:1178.2px;top:92.33px;width:0.5px;height:1px;background:#cccccc;opacity:0.5;filter:saturate(0.4)"></div>
<div class="abs" style="left:1178.7px;top:92.33px;width:3.6px;height:1px;background:#9cdcfe;opacity:0.5;filter:saturate(0.4)"></div>
<div class="abs" style="left:1182.4px;top:92.33px;width:0.5px;height:1px;background:#cccccc;opacity:0.5;filter:saturate(0.4)"></div>
<div class="abs" style="left:1164.2px;top:93.64px;width:3.6px;height:1px;background:#4ec9b0;opacity:0.5;filter:saturate(0.4)"></div>
<div class="abs" style="left:1168.3px;top:93.64px;width:1.0px;height:1px;background:#9cdcfe;opacity:0.5;filter:saturate(0.4)"></div>
<div class="abs" style="left:1169.4px;top:93.64px;width:0.5px;height:1px;background:#cccccc;opacity:0.5;filter:saturate(0.4)"></div>
<div class="abs" style="left:1169.9px;top:93.64px;width:1.6px;height:1px;background:#c586c0;opacity:0.5;filter:saturate(0.4)"></div>
<div class="abs" style="left:1172.0px;top:93.64px;width:3.6px;height:1px;background:#dcdcaa;opacity:0.5;filter:saturate(0.4)"></div>
<div class="abs" style="left:1175.6px;top:93.64px;width:0.5px;height:1px;background:#179fff;opacity:0.5;filter:saturate(0.4)"></div>
<div class="abs" style="left:1176.1px;top:93.64px;width:3.1px;height:1px;background:#4ec9b0;opacity:0.5;filter:saturate(0.4)"></div>
<div class="abs" style="left:1179.2px;top:93.64px;width:0.5px;height:1px;background:#cccccc;opacity:0.5;filter:saturate(0.4)"></div>
<div class="abs" style="left:1179.8px;top:93.64px;width:1.0px;height:1px;background:#4fc1ff;opacity:0.5;filter:saturate(0.4)"></div>
<div class="abs" style="left:1180.8px;top:93.64px;width:0.5px;height:1px;background:#179fff;opacity:0.5;filter:saturate(0.4)"></div>
<div class="abs" style="left:1181.3px;top:93.64px;width:0.5px;height:1px;background:#cccccc;opacity:0.5;filter:saturate(0.4)"></div>
<div class="abs" style="left:1164.2px;top:97.57px;width:2.6px;height:1px;background:#c586c0;opacity:0.5;filter:saturate(0.4)"></div>
<div class="abs" style="left:1166.8px;top:97.57px;width:0.5px;height:1px;background:#179fff;opacity:0.5;filter:saturate(0.4)"></div>
<div class="abs" style="left:1167.3px;top:97.57px;width:2.1px;height:1px;background:#569cd6;opacity:0.5;filter:saturate(0.4)"></div>
<div class="abs" style="left:1169.4px;top:97.57px;width:0.5px;height:1px;background:#179fff;opacity:0.5;filter:saturate(0.4)"></div>
<div class="abs" style="left:1169.9px;top:97.57px;width:0.5px;height:1px;background:#179fff;opacity:0.5;filter:saturate(0.4)"></div>
<div class="abs" style="left:1166.2px;top:98.88px;width:3.1px;height:1px;background:#4ec9b0;opacity:0.5;filter:saturate(0.4)"></div>
<div class="abs" style="left:1169.4px;top:98.88px;width:0.5px;height:1px;background:#cccccc;opacity:0.5;filter:saturate(0.4)"></div>
<div class="abs" style="left:1169.9px;top:98.88px;width:1.6px;height:1px;background:#4fc1ff;opacity:0.5;filter:saturate(0.4)"></div>
<div class="abs" style="left:1171.4px;top:98.88px;width:0.5px;height:1px;background:#cccccc;opacity:0.5;filter:saturate(0.4)"></div>
<div class="abs" style="left:1172.0px;top:98.88px;width:3.6px;height:1px;background:#dcdcaa;opacity:0.5;filter:saturate(0.4)"></div>
<div class="abs" style="left:1175.6px;top:98.88px;width:0.5px;height:1px;background:#ffd700;opacity:0.5;filter:saturate(0.4)"></div>
<div class="abs" style="left:1176.1px;top:98.88px;width:32.8px;height:1px;background:#ce9178;opacity:0.5;filter:saturate(0.4)"></div>
<div class="abs" style="left:1208.9px;top:98.88px;width:0.5px;height:1px;background:#ffd700;opacity:0.5;filter:saturate(0.4)"></div>
<div class="abs" style="left:1209.4px;top:98.88px;width:0.5px;height:1px;background:#cccccc;opacity:0.5;filter:saturate(0.4)"></div>
<div class="abs" style="left:1166.2px;top:100.19px;width:3.1px;height:1px;background:#4ec9b0;opacity:0.5;filter:saturate(0.4)"></div>
<div class="abs" style="left:1169.4px;top:100.19px;width:0.5px;height:1px;background:#cccccc;opacity:0.5;filter:saturate(0.4)"></div>
<div class="abs" style="left:1169.9px;top:100.19px;width:1.6px;height:1px;background:#4fc1ff;opacity:0.5;filter:saturate(0.4)"></div>
<div class="abs" style="left:1171.4px;top:100.19px;width:0.5px;height:1px;background:#cccccc;opacity:0.5;filter:saturate(0.4)"></div>
<div class="abs" style="left:1172.0px;top:100.19px;width:3.6px;height:1px;background:#dcdcaa;opacity:0.5;filter:saturate(0.4)"></div>
<div class="abs" style="left:1175.6px;top:100.19px;width:0.5px;height:1px;background:#ffd700;opacity:0.5;filter:saturate(0.4)"></div>
<div class="abs" style="left:1176.1px;top:100.19px;width:12.0px;height:1px;background:#ce9178;opacity:0.5;filter:saturate(0.4)"></div>
<div class="abs" style="left:1188.1px;top:100.19px;width:0.5px;height:1px;background:#ffd700;opacity:0.5;filter:saturate(0.4)"></div>
<div class="abs" style="left:1188.6px;top:100.19px;width:0.5px;height:1px;background:#cccccc;opacity:0.5;filter:saturate(0.4)"></div>
<div class="abs" style="left:1166.2px;top:101.50px;width:3.1px;height:1px;background:#4ec9b0;opacity:0.5;filter:saturate(0.4)"></div>
<div class="abs" style="left:1169.4px;top:101.50px;width:0.5px;height:1px;background:#cccccc;opacity:0.5;filter:saturate(0.4)"></div>
<div class="abs" style="left:1169.9px;top:101.50px;width:1.6px;height:1px;background:#4fc1ff;opacity:0.5;filter:saturate(0.4)"></div>
<div class="abs" style="left:1171.4px;top:101.50px;width:0.5px;height:1px;background:#cccccc;opacity:0.5;filter:saturate(0.4)"></div>
<div class="abs" style="left:1172.0px;top:101.50px;width:3.6px;height:1px;background:#dcdcaa;opacity:0.5;filter:saturate(0.4)"></div>
<div class="abs" style="left:1175.6px;top:101.50px;width:0.5px;height:1px;background:#ffd700;opacity:0.5;filter:saturate(0.4)"></div>
<div class="abs" style="left:1176.1px;top:101.50px;width:12.0px;height:1px;background:#ce9178;opacity:0.5;filter:saturate(0.4)"></div>
<div class="abs" style="left:1188.1px;top:101.50px;width:0.5px;height:1px;background:#ffd700;opacity:0.5;filter:saturate(0.4)"></div>
<div class="abs" style="left:1188.6px;top:101.50px;width:0.5px;height:1px;background:#cccccc;opacity:0.5;filter:saturate(0.4)"></div>
<div class="abs" style="left:1166.2px;top:102.81px;width:3.1px;height:1px;background:#4ec9b0;opacity:0.5;filter:saturate(0.4)"></div>
<div class="abs" style="left:1169.4px;top:102.81px;width:0.5px;height:1px;background:#cccccc;opacity:0.5;filter:saturate(0.4)"></div>
<div class="abs" style="left:1169.9px;top:102.81px;width:1.6px;height:1px;background:#4fc1ff;opacity:0.5;filter:saturate(0.4)"></div>
<div class="abs" style="left:1171.4px;top:102.81px;width:0.5px;height:1px;background:#cccccc;opacity:0.5;filter:saturate(0.4)"></div>
<div class="abs" style="left:1172.0px;top:102.81px;width:3.6px;height:1px;background:#dcdcaa;opacity:0.5;filter:saturate(0.4)"></div>
<div class="abs" style="left:1175.6px;top:102.81px;width:0.5px;height:1px;background:#ffd700;opacity:0.5;filter:saturate(0.4)"></div>
<div class="abs" style="left:1176.1px;top:102.81px;width:15.1px;height:1px;background:#ce9178;opacity:0.5;filter:saturate(0.4)"></div>
<div class="abs" style="left:1191.2px;top:102.81px;width:0.5px;height:1px;background:#ffd700;opacity:0.5;filter:saturate(0.4)"></div>
<div class="abs" style="left:1191.7px;top:102.81px;width:0.5px;height:1px;background:#cccccc;opacity:0.5;filter:saturate(0.4)"></div>
<div class="abs" style="left:1166.2px;top:104.12px;width:3.1px;height:1px;background:#4ec9b0;opacity:0.5;filter:saturate(0.4)"></div>
<div class="abs" style="left:1169.4px;top:104.12px;width:0.5px;height:1px;background:#cccccc;opacity:0.5;filter:saturate(0.4)"></div>
<div class="abs" style="left:1169.9px;top:104.12px;width:1.6px;height:1px;background:#4fc1ff;opacity:0.5;filter:saturate(0.4)"></div>
<div class="abs" style="left:1171.4px;top:104.12px;width:0.5px;height:1px;background:#cccccc;opacity:0.5;filter:saturate(0.4)"></div>
<div class="abs" style="left:1172.0px;top:104.12px;width:3.6px;height:1px;background:#dcdcaa;opacity:0.5;filter:saturate(0.4)"></div>
<div class="abs" style="left:1175.6px;top:104.12px;width:0.5px;height:1px;background:#ffd700;opacity:0.5;filter:saturate(0.4)"></div>
<div class="abs" style="left:1176.1px;top:104.12px;width:9.9px;height:1px;background:#ce9178;opacity:0.5;filter:saturate(0.4)"></div>
<div class="abs" style="left:1186.0px;top:104.12px;width:0.5px;height:1px;background:#ffd700;opacity:0.5;filter:saturate(0.4)"></div>
<div class="abs" style="left:1186.5px;top:104.12px;width:0.5px;height:1px;background:#cccccc;opacity:0.5;filter:saturate(0.4)"></div>
<div class="abs" style="left:1166.2px;top:105.43px;width:3.1px;height:1px;background:#4ec9b0;opacity:0.5;filter:saturate(0.4)"></div>
<div class="abs" style="left:1169.4px;top:105.43px;width:0.5px;height:1px;background:#cccccc;opacity:0.5;filter:saturate(0.4)"></div>
<div class="abs" style="left:1169.9px;top:105.43px;width:1.6px;height:1px;background:#4fc1ff;opacity:0.5;filter:saturate(0.4)"></div>
<div class="abs" style="left:1171.4px;top:105.43px;width:0.5px;height:1px;background:#cccccc;opacity:0.5;filter:saturate(0.4)"></div>
<div class="abs" style="left:1172.0px;top:105.43px;width:2.6px;height:1px;background:#dcdcaa;opacity:0.5;filter:saturate(0.4)"></div>
<div class="abs" style="left:1174.6px;top:105.43px;width:0.5px;height:1px;background:#ffd700;opacity:0.5;filter:saturate(0.4)"></div>
<div class="abs" style="left:1175.1px;top:105.43px;width:22.9px;height:1px;background:#ce9178;opacity:0.5;filter:saturate(0.4)"></div>
<div class="abs" style="left:1198.0px;top:105.43px;width:0.5px;height:1px;background:#ffd700;opacity:0.5;filter:saturate(0.4)"></div>
<div class="abs" style="left:1198.5px;top:105.43px;width:0.5px;height:1px;background:#cccccc;opacity:0.5;filter:saturate(0.4)"></div>
<div class="abs" style="left:1166.2px;top:109.36px;width:1.6px;height:1px;background:#4ec9b0;opacity:0.5;filter:saturate(0.4)"></div>
<div class="abs" style="left:1168.3px;top:109.36px;width:3.1px;height:1px;background:#9cdcfe;opacity:0.5;filter:saturate(0.4)"></div>
<div class="abs" style="left:1171.4px;top:109.36px;width:0.5px;height:1px;background:#cccccc;opacity:0.5;filter:saturate(0.4)"></div>
<div class="abs" style="left:1172.0px;top:109.36px;width:1.0px;height:1px;background:#9cdcfe;opacity:0.5;filter:saturate(0.4)"></div>
<div class="abs" style="left:1173.0px;top:109.36px;width:0.5px;height:1px;background:#cccccc;opacity:0.5;filter:saturate(0.4)"></div>
<div class="abs" style="left:1173.5px;top:109.36px;width:3.6px;height:1px;background:#dcdcaa;opacity:0.5;filter:saturate(0.4)"></div>
<div class="abs" style="left:1177.2px;top:109.36px;width:1.0px;height:1px;background:#ffd700;opacity:0.5;filter:saturate(0.4)"></div>
<div class="abs" style="left:1178.2px;top:109.36px;width:0.5px;height:1px;background:#cccccc;opacity:0.5;filter:saturate(0.4)"></div>
<div class="abs" style="left:1166.2px;top:110.67px;width:3.1px;height:1px;background:#c586c0;opacity:0.5;filter:saturate(0.4)"></div>
<div class="abs" style="left:1169.4px;top:110.67px;width:0.5px;height:1px;background:#ffd700;opacity:0.5;filter:saturate(0.4)"></div>
<div class="abs" style="left:1169.9px;top:110.67px;width:3.1px;height:1px;background:#9cdcfe;opacity:0.5;filter:saturate(0.4)"></div>
<div class="abs" style="left:1173.0px;top:110.67px;width:0.5px;height:1px;background:#ffd700;opacity:0.5;filter:saturate(0.4)"></div>
<div class="abs" style="left:1173.5px;top:110.67px;width:0.5px;height:1px;background:#ffd700;opacity:0.5;filter:saturate(0.4)"></div>
<div class="abs" style="left:1168.3px;top:111.98px;width:2.1px;height:1px;background:#c586c0;opacity:0.5;filter:saturate(0.4)"></div>
<div class="abs" style="left:1170.9px;top:111.98px;width:0.5px;height:1px;background:#b5cea8;opacity:0.5;filter:saturate(0.4)"></div>
<div class="abs" style="left:1171.4px;top:111.98px;width:0.5px;height:1px;background:#cccccc;opacity:0.5;filter:saturate(0.4)"></div>
<div class="abs" style="left:1168.3px;top:113.29px;width:3.1px;height:1px;background:#4ec9b0;opacity:0.5;filter:saturate(0.4)"></div>
<div class="abs" style="left:1171.4px;top:113.29px;width:0.5px;height:1px;background:#cccccc;opacity:0.5;filter:saturate(0.4)"></div>
<div class="abs" style="left:1172.0px;top:113.29px;width:1.6px;height:1px;background:#4fc1ff;opacity:0.5;filter:saturate(0.4)"></div>
<div class="abs" style="left:1173.5px;top:113.29px;width:0.5px;height:1px;background:#cccccc;opacity:0.5;filter:saturate(0.4)"></div>
<div class="abs" style="left:1174.0px;top:113.29px;width:3.6px;height:1px;background:#dcdcaa;opacity:0.5;filter:saturate(0.4)"></div>
<div class="abs" style="left:1177.7px;top:113.29px;width:0.5px;height:1px;background:#da70d6;opacity:0.5;filter:saturate(0.4)"></div>
<div class="abs" style="left:1178.2px;top:113.29px;width:16.1px;height:1px;background:#ce9178;opacity:0.5;filter:saturate(0.4)"></div>
<div class="abs" style="left:1194.3px;top:113.29px;width:0.5px;height:1px;background:#da70d6;opacity:0.5;filter:saturate(0.4)"></div>
<div class="abs" style="left:1194.8px;top:113.29px;width:0.5px;height:1px;background:#cccccc;opacity:0.5;filter:saturate(0.4)"></div>
<div class="abs" style="left:1168.3px;top:115.91px;width:4.2px;height:1px;background:#9cdcfe;opacity:0.5;filter:saturate(0.4)"></div>
<div class="abs" style="left:1172.5px;top:115.91px;width:0.5px;height:1px;background:#cccccc;opacity:0.5;filter:saturate(0.4)"></div>
<div class="abs" style="left:1173.0px;top:115.91px;width:1.0px;height:1px;background:#9cdcfe;opacity:0.5;filter:saturate(0.4)"></div>
<div class="abs" style="left:1174.0px;top:115.91px;width:0.5px;height:1px;background:#cccccc;opacity:0.5;filter:saturate(0.4)"></div>
<div class="abs" style="left:1174.6px;top:115.91px;width:3.6px;height:1px;background:#dcdcaa;opacity:0.5;filter:saturate(0.4)"></div>
<div class="abs" style="left:1178.2px;top:115.91px;width:1.0px;height:1px;background:#da70d6;opacity:0.5;filter:saturate(0.4)"></div>
<div class="abs" style="left:1179.2px;top:115.91px;width:0.5px;height:1px;background:#cccccc;opacity:0.5;filter:saturate(0.4)"></div>
<div class="abs" style="left:1168.3px;top:118.53px;width:1.0px;height:1px;background:#c586c0;opacity:0.5;filter:saturate(0.4)"></div>
<div class="abs" style="left:1169.4px;top:118.53px;width:0.5px;height:1px;background:#da70d6;opacity:0.5;filter:saturate(0.4)"></div>
<div class="abs" style="left:1169.9px;top:118.53px;width:3.6px;height:1px;background:#9cdcfe;opacity:0.5;filter:saturate(0.4)"></div>
<div class="abs" style="left:1173.5px;top:118.53px;width:1.0px;height:1px;background:#cccccc;opacity:0.5;filter:saturate(0.4)"></div>
<div class="abs" style="left:1174.6px;top:118.53px;width:4.2px;height:1px;background:#9cdcfe;opacity:0.5;filter:saturate(0.4)"></div>
<div class="abs" style="left:1178.7px;top:118.53px;width:0.5px;height:1px;background:#da70d6;opacity:0.5;filter:saturate(0.4)"></div>
<div class="abs" style="left:1179.2px;top:118.53px;width:0.5px;height:1px;background:#da70d6;opacity:0.5;filter:saturate(0.4)"></div>
<div class="abs" style="left:1170.4px;top:119.84px;width:3.6px;height:1px;background:#9cdcfe;opacity:0.5;filter:saturate(0.4)"></div>
<div class="abs" style="left:1174.0px;top:119.84px;width:1.0px;height:1px;background:#cccccc;opacity:0.5;filter:saturate(0.4)"></div>
<div class="abs" style="left:1175.1px;top:119.84px;width:3.6px;height:1px;background:#9cdcfe;opacity:0.5;filter:saturate(0.4)"></div>
<div class="abs" style="left:1178.7px;top:119.84px;width:0.5px;height:1px;background:#cccccc;opacity:0.5;filter:saturate(0.4)"></div>
<div class="abs" style="left:1179.2px;top:119.84px;width:4.2px;height:1px;background:#9cdcfe;opacity:0.5;filter:saturate(0.4)"></div>
<div class="abs" style="left:1183.4px;top:119.84px;width:0.5px;height:1px;background:#cccccc;opacity:0.5;filter:saturate(0.4)"></div>
<div class="abs" style="left:1170.4px;top:121.15px;width:3.1px;height:1px;background:#4ec9b0;opacity:0.5;filter:saturate(0.4)"></div>
<div class="abs" style="left:1173.5px;top:121.15px;width:0.5px;height:1px;background:#cccccc;opacity:0.5;filter:saturate(0.4)"></div>
<div class="abs" style="left:1174.0px;top:121.15px;width:1.6px;height:1px;background:#4fc1ff;opacity:0.5;filter:saturate(0.4)"></div>
<div class="abs" style="left:1175.6px;top:121.15px;width:0.5px;height:1px;background:#cccccc;opacity:0.5;filter:saturate(0.4)"></div>
<div class="abs" style="left:1176.1px;top:121.15px;width:3.6px;height:1px;background:#dcdcaa;opacity:0.5;filter:saturate(0.4)"></div>
<div class="abs" style="left:1179.8px;top:121.15px;width:0.5px;height:1px;background:#179fff;opacity:0.5;filter:saturate(0.4)"></div>
<div class="abs" style="left:1180.3px;top:121.15px;width:15.1px;height:1px;background:#ce9178;opacity:0.5;filter:saturate(0.4)"></div>
<div class="abs" style="left:1195.4px;top:121.15px;width:0.5px;height:1px;background:#179fff;opacity:0.5;filter:saturate(0.4)"></div>
<div class="abs" style="left:1195.9px;top:121.15px;width:0.5px;height:1px;background:#cccccc;opacity:0.5;filter:saturate(0.4)"></div>
<div class="abs" style="left:1168.3px;top:122.46px;width:0.5px;height:1px;background:#da70d6;opacity:0.5;filter:saturate(0.4)"></div>
<div class="abs" style="left:1168.3px;top:123.77px;width:2.1px;height:1px;background:#c586c0;opacity:0.5;filter:saturate(0.4)"></div>
<div class="abs" style="left:1170.4px;top:123.77px;width:0.5px;height:1px;background:#da70d6;opacity:0.5;filter:saturate(0.4)"></div>
<div class="abs" style="left:1170.4px;top:125.08px;width:3.1px;height:1px;background:#4ec9b0;opacity:0.5;filter:saturate(0.4)"></div>
<div class="abs" style="left:1173.5px;top:125.08px;width:0.5px;height:1px;background:#cccccc;opacity:0.5;filter:saturate(0.4)"></div>
<div class="abs" style="left:1174.0px;top:125.08px;width:1.6px;height:1px;background:#4fc1ff;opacity:0.5;filter:saturate(0.4)"></div>
<div class="abs" style="left:1175.6px;top:125.08px;width:0.5px;height:1px;background:#cccccc;opacity:0.5;filter:saturate(0.4)"></div>
<div class="abs" style="left:1176.1px;top:125.08px;width:3.6px;height:1px;background:#dcdcaa;opacity:0.5;filter:saturate(0.4)"></div>
<div class="abs" style="left:1179.8px;top:125.08px;width:0.5px;height:1px;background:#179fff;opacity:0.5;filter:saturate(0.4)"></div>
<div class="abs" style="left:1180.3px;top:125.08px;width:11.4px;height:1px;background:#ce9178;opacity:0.5;filter:saturate(0.4)"></div>
<div class="abs" style="left:1191.7px;top:125.08px;width:0.5px;height:1px;background:#179fff;opacity:0.5;filter:saturate(0.4)"></div>
<div class="abs" style="left:1192.2px;top:125.08px;width:0.5px;height:1px;background:#cccccc;opacity:0.5;filter:saturate(0.4)"></div>
<div class="abs" style="left:1168.3px;top:126.39px;width:0.5px;height:1px;background:#da70d6;opacity:0.5;filter:saturate(0.4)"></div>
<div class="abs" style="left:1168.3px;top:127.70px;width:3.1px;height:1px;background:#4ec9b0;opacity:0.5;filter:saturate(0.4)"></div>
<div class="abs" style="left:1171.4px;top:127.70px;width:0.5px;height:1px;background:#cccccc;opacity:0.5;filter:saturate(0.4)"></div>
<div class="abs" style="left:1172.0px;top:127.70px;width:1.6px;height:1px;background:#4fc1ff;opacity:0.5;filter:saturate(0.4)"></div>
<div class="abs" style="left:1173.5px;top:127.70px;width:0.5px;height:1px;background:#cccccc;opacity:0.5;filter:saturate(0.4)"></div>
<div class="abs" style="left:1174.0px;top:127.70px;width:3.6px;height:1px;background:#dcdcaa;opacity:0.5;filter:saturate(0.4)"></div>
<div class="abs" style="left:1177.7px;top:127.70px;width:0.5px;height:1px;background:#da70d6;opacity:0.5;filter:saturate(0.4)"></div>
<div class="abs" style="left:1178.2px;top:127.70px;width:1.0px;height:1px;background:#ce9178;opacity:0.5;filter:saturate(0.4)"></div>
<div class="abs" style="left:1179.2px;top:127.70px;width:0.5px;height:1px;background:#da70d6;opacity:0.5;filter:saturate(0.4)"></div>
<div class="abs" style="left:1179.8px;top:127.70px;width:0.5px;height:1px;background:#cccccc;opacity:0.5;filter:saturate(0.4)"></div>
<div class="abs" style="left:1168.3px;top:129.01px;width:2.6px;height:1px;background:#c586c0;opacity:0.5;filter:saturate(0.4)"></div>
<div class="abs" style="left:1170.9px;top:129.01px;width:0.5px;height:1px;background:#cccccc;opacity:0.5;filter:saturate(0.4)"></div>
<div class="abs" style="left:1168.3px;top:131.63px;width:2.1px;height:1px;background:#c586c0;opacity:0.5;filter:saturate(0.4)"></div>
<div class="abs" style="left:1170.9px;top:131.63px;width:0.5px;height:1px;background:#b5cea8;opacity:0.5;filter:saturate(0.4)"></div>
<div class="abs" style="left:1171.4px;top:131.63px;width:0.5px;height:1px;background:#cccccc;opacity:0.5;filter:saturate(0.4)"></div>
<div class="abs" style="left:1168.3px;top:132.94px;width:3.1px;height:1px;background:#4ec9b0;opacity:0.5;filter:saturate(0.4)"></div>
<div class="abs" style="left:1171.4px;top:132.94px;width:0.5px;height:1px;background:#cccccc;opacity:0.5;filter:saturate(0.4)"></div>
<div class="abs" style="left:1172.0px;top:132.94px;width:1.6px;height:1px;background:#4fc1ff;opacity:0.5;filter:saturate(0.4)"></div>
<div class="abs" style="left:1173.5px;top:132.94px;width:0.5px;height:1px;background:#cccccc;opacity:0.5;filter:saturate(0.4)"></div>
<div class="abs" style="left:1174.0px;top:132.94px;width:3.6px;height:1px;background:#dcdcaa;opacity:0.5;filter:saturate(0.4)"></div>
<div class="abs" style="left:1177.7px;top:132.94px;width:0.5px;height:1px;background:#da70d6;opacity:0.5;filter:saturate(0.4)"></div>
<div class="abs" style="left:1178.2px;top:132.94px;width:13.5px;height:1px;background:#ce9178;opacity:0.5;filter:saturate(0.4)"></div>
<div class="abs" style="left:1191.7px;top:132.94px;width:0.5px;height:1px;background:#da70d6;opacity:0.5;filter:saturate(0.4)"></div>
<div class="abs" style="left:1192.2px;top:132.94px;width:0.5px;height:1px;background:#cccccc;opacity:0.5;filter:saturate(0.4)"></div>
<div class="abs" style="left:1168.3px;top:134.25px;width:3.6px;height:1px;background:#9cdcfe;opacity:0.5;filter:saturate(0.4)"></div>
<div class="abs" style="left:1172.0px;top:134.25px;width:0.5px;height:1px;background:#cccccc;opacity:0.5;filter:saturate(0.4)"></div>
<div class="abs" style="left:1172.5px;top:134.25px;width:1.0px;height:1px;background:#9cdcfe;opacity:0.5;filter:saturate(0.4)"></div>
<div class="abs" style="left:1173.5px;top:134.25px;width:0.5px;height:1px;background:#cccccc;opacity:0.5;filter:saturate(0.4)"></div>
<div class="abs" style="left:1174.0px;top:134.25px;width:3.6px;height:1px;background:#dcdcaa;opacity:0.5;filter:saturate(0.4)"></div>
<div class="abs" style="left:1177.7px;top:134.25px;width:1.0px;height:1px;background:#da70d6;opacity:0.5;filter:saturate(0.4)"></div>
<div class="abs" style="left:1178.7px;top:134.25px;width:0.5px;height:1px;background:#cccccc;opacity:0.5;filter:saturate(0.4)"></div>
<div class="abs" style="left:1212px;top:67px;width:1px;height:634px;background:#191919"></div>
<div class="abs" style="left:1213px;top:88px;width:11px;height:236px;background:#2e2e2e"></div>
<div class="abs" style="left:1213px;top:105px;width:11px;height:2px;background:#a0a0a0"></div>
<div class="abs" style="left:1220px;top:118px;width:4px;height:8px;background:#cca700"></div><svg style="left:776.5px;top:295px" width="10" height="17" viewBox="0 0 10 17"><path d="M0.8 1.2H3.6L4.7 2.2L5.8 1.2H8.6M4.7 2.2V14.8M0.8 15.8H3.6L4.7 14.8L5.8 15.8H8.6" stroke="#050505" stroke-width="1.6" fill="none"/></svg>

<!-- STATUS BAR -->
<div id="status"></div>
<div class="abs" style="left:0;top:701px;width:31px;height:19px;background:#1f7fd8"></div>
<svg style="left:11px;top:705.5px" width="9" height="11" viewBox="0 0 9 11"><path d="M0.7 4.5L3.7 7.3L0.7 10.2" stroke="#ffffff" stroke-width="1.2" fill="none"/><path d="M8.3 0.8L5.3 3.6L8.3 6.5" stroke="#ffffff" stroke-width="1.2" fill="none"/></svg>
<svg style="left:38px;top:706px" width="11" height="11" viewBox="0 0 11 11"><circle cx="5.5" cy="5.5" r="4.8" stroke="#cccccc" stroke-width="1" fill="none"/><path d="M3.5 3.5L7.5 7.5M7.5 3.5L3.5 7.5" stroke="#cccccc" stroke-width="1"/></svg>
<div class="abs" style="left:52px;top:706.2px;font-size:10.2px;color:#cccccc">0</div>
<svg style="left:61.5px;top:705.5px" width="12" height="11" viewBox="0 0 12 11"><path d="M6 0.8L11.3 10.3H0.7Z M6 4V7.3M6 8.3V9" stroke="#cccccc" stroke-width="1" fill="none" stroke-linejoin="round"/></svg>
<div class="abs" style="left:76px;top:706.2px;font-size:10.2px;color:#cccccc">3</div>
<svg style="left:96.3px;top:704.3px" width="12" height="12.5" viewBox="0 0 22 23"><path d="M0.9 15.5C2 9.5 7 6.5 13.5 6.3V1.8L21.1 8.6L13.5 15.2V10.8C8 10.8 4 12.3 0.9 15.5Z" stroke="#d0d0d0" stroke-width="2" fill="none" stroke-linejoin="round"/><circle cx="9.5" cy="18.8" r="3.2" stroke="#d0d0d0" stroke-width="2.2" fill="none"/></svg>
<div class="abs" style="left:111px;top:706.2px;font-size:10.2px;color:#cccccc;white-space:pre"><span class="cal" title="Live Share#0" style="display:inline-block;transform:translateX(0.49px) scaleX(0.9696);transform-origin:0 50%">Live Share</span></div>
<svg style="left:174.5px;top:705.5px" width="11" height="11" viewBox="0 0 11 11"><circle cx="5.5" cy="5.5" r="4.8" stroke="#cccccc" stroke-width="1" fill="none"/><ellipse cx="5.5" cy="5.5" rx="2" ry="4.8" stroke="#cccccc" stroke-width="0.9" fill="none"/><path d="M0.7 4H10.3M0.7 7H10.3" stroke="#cccccc" stroke-width="0.9"/></svg>
<div class="abs" style="left:188.5px;top:706.2px;font-size:10.2px;color:#cccccc;white-space:pre"><span class="cal" title="Open In Browser#0" style="display:inline-block;transform:translateX(-0.50px) scaleX(1.0066);transform-origin:0 50%">Open In Browser</span></div>
<div class="abs" style="left:728px;top:706.2px;font-size:10.2px;color:#cccccc;white-space:pre"><span class="cal" title="Ln 3, Col 45#0" style="display:inline-block;transform:translateX(0.00px) scaleX(0.9820);transform-origin:0 50%">Ln 3, Col 45</span></div>
<div class="abs" style="left:796.5px;top:706.2px;font-size:10.2px;color:#cccccc;white-space:pre"><span class="cal" title="Spaces: 4#0" style="display:inline-block;transform:translateX(-0.47px) scaleX(0.9445);transform-origin:0 50%">Spaces: 4</span></div>
<div class="abs" style="left:854px;top:706.2px;font-size:10.2px;color:#cccccc;white-space:pre"><span class="cal" title="UTF-8#0" style="display:inline-block;transform:translateX(0.00px) scaleX(0.9663);transform-origin:0 50%">UTF-8</span></div>
<div class="abs" style="left:896px;top:706.2px;font-size:10.2px;color:#cccccc;white-space:pre"><span class="cal" title="CRLF#0" style="display:inline-block;transform:translateX(0.47px) scaleX(0.8710);transform-origin:0 50%">CRLF</span></div>
<div class="abs" style="left:949px;top:706.2px;font-size:10.2px;color:#cccccc;white-space:pre"><span class="cal" title="Java#0" style="display:inline-block;transform:translateX(0.00px) scaleX(0.8636);transform-origin:0 50%">Java</span></div>
<div class="abs" style="left:996px;top:706.2px;font-size:10.2px;color:#cccccc;white-space:pre"><span class="cal" title="Go Live#0" style="display:inline-block;transform:translateX(0.49px) scaleX(0.9719);transform-origin:0 50%">Go Live</span></div>
<div class="abs" style="left:1060.5px;top:706.2px;font-size:10.2px;color:#cccccc;white-space:pre"><span class="cal" title="Go Live#1" style="display:inline-block;transform:translateX(-0.03px) scaleX(0.9453);transform-origin:0 50%">Go Live</span></div>
<div class="abs" style="left:1124.5px;top:706.2px;font-size:10.2px;color:#cccccc;white-space:pre"><span class="cal" title="Prettier#0" style="display:inline-block;transform:translateX(-1.04px) scaleX(1.0460);transform-origin:0 50%">Prettier</span></div>
<div class="abs" style="left:931px;top:705.7px;font-size:10.2px;color:#cccccc;white-space:pre">{ }</div>
<svg style="left:981.5px;top:704.5px" width="12" height="13" viewBox="0 0 12 13"><path d="M2.6 9A4.7 4.7 0 1 1 8.9 9" stroke="#cccccc" stroke-width="1" fill="none"/><path d="M4.1 7.4A2.6 2.6 0 1 1 7.4 7.4" stroke="#cccccc" stroke-width="1" fill="none"/><path d="M5.75 5.2V11.8" stroke="#d8d8d8" stroke-width="1.5"/></svg>
<svg style="left:1045.5px;top:705.5px" width="11" height="11" viewBox="0 0 11 11"><circle cx="5.5" cy="5.5" r="4.8" stroke="#cccccc" stroke-width="1" fill="none"/><path d="M4.2 3.3L7.7 5.5L4.2 7.7Z" stroke="#cccccc" stroke-width="0.9" fill="none"/></svg>
<svg style="left:1109.5px;top:705.5px" width="11" height="11" viewBox="0 0 11 11"><circle cx="5.5" cy="5.5" r="4.8" stroke="#cccccc" stroke-width="1" fill="none"/><path d="M2.2 8.8L8.8 2.2" stroke="#cccccc" stroke-width="1"/></svg>
<svg style="left:1173px;top:705px" width="12" height="11" viewBox="0 0 12 11"><path d="M5 0.5H11.5V6H9.5L8 7.5V6H7" stroke="#cccccc" stroke-width="0.9" fill="none"/><circle cx="4.5" cy="5" r="2" stroke="#cccccc" stroke-width="0.9" fill="none"/><path d="M0.7 10.5C1 8.5 2.5 7.5 4.5 7.5C6.5 7.5 8 8.5 8.3 10.5" stroke="#cccccc" stroke-width="0.9" fill="none"/></svg>
<svg style="left:1201px;top:704.5px" width="11" height="12" viewBox="0 0 11 12"><path d="M5 1.5C3 1.5 2 3 2 5V8L0.7 9.5H9.3L8 8V6" stroke="#cccccc" stroke-width="1" fill="none"/><path d="M4 10.5H6" stroke="#cccccc" stroke-width="1"/><circle cx="8" cy="3" r="2.3" fill="#cccccc"/></svg>
</body></html>
